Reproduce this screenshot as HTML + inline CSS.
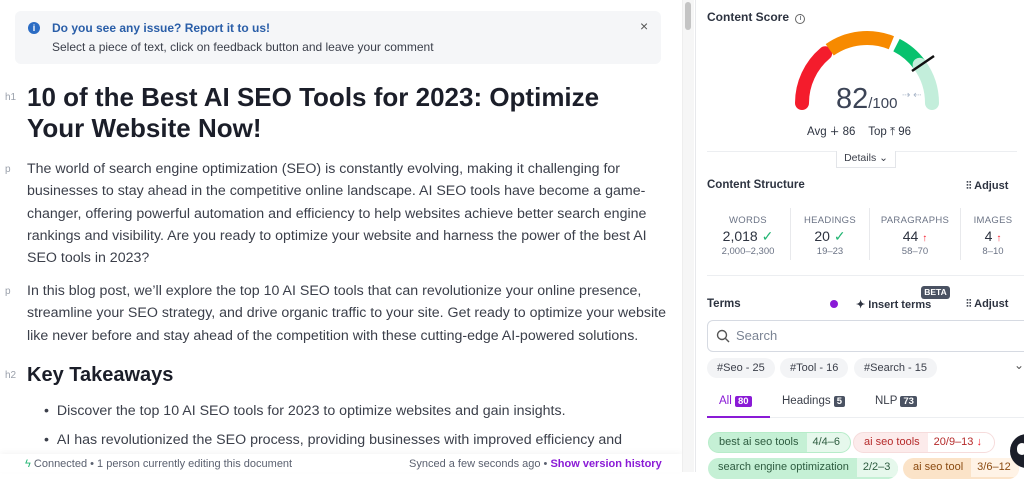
<!DOCTYPE html>
<html><head><meta charset="utf-8"><style>
*{margin:0;padding:0;box-sizing:border-box}
body{width:1024px;height:472px;overflow:hidden;background:#fff;font-family:"Liberation Sans",sans-serif;color:#1f2433;position:relative}
.abs{position:absolute}
.p{font-size:14.2px;line-height:22.3px;color:#3b3f4a;left:27px;width:625px}
.tag{font-size:10px;color:#9aa0ab;left:5px}
.lbl{font-size:9.5px;color:#6b7385;letter-spacing:.3px;text-align:center}
.big{font-size:14px;color:#2d3340;text-align:center}
.rng{font-size:9.5px;color:#6b7385;text-align:center}
.chip{background:#f3f4f6;border-radius:12px;height:20px;font-size:11px;color:#3b3f4a;line-height:20px;padding:0 10px}
</style></head><body>
<div class="abs" style="left:15px;top:11px;width:646px;height:53px;background:#f5f6f8;border-radius:6px"></div>
<div class="abs" style="left:28px;top:22px;width:12px;height:12px;border-radius:50%;background:#2b6cc4;color:#fff;font-size:9px;font-weight:bold;text-align:center;line-height:12px">i</div>
<div class="abs" style="left:52px;top:21px;font-size:12px;font-weight:bold;color:#2a5ea8">Do you see any issue? Report it to us!</div>
<div class="abs" style="left:52px;top:40px;font-size:12px;color:#3b3f4a">Select a piece of text, click on feedback button and leave your comment</div>
<div class="abs" style="left:640px;top:18px;font-size:14px;color:#555">×</div>

<div class="abs tag" style="top:92px">h1</div>
<div class="abs" style="left:27px;top:82px;font-size:26px;font-weight:bold;line-height:31px;color:#1b1e29;width:590px">10 of the Best AI SEO Tools for 2023: Optimize Your Website Now!</div>
<div class="abs tag" style="top:164px">p</div>
<div class="abs p" style="top:158px;width:622px">The world of search engine optimization (SEO) is constantly evolving, making it challenging for businesses to stay ahead in the competitive online landscape. AI SEO tools have become a game-changer, offering powerful automation and efficiency to help websites achieve better search engine rankings and visibility. Are you ready to optimize your website and harness the power of the best AI SEO tools in 2023?</div>
<div class="abs tag" style="top:286px">p</div>
<div class="abs p" style="top:280px;width:640px">In this blog post, we’ll explore the top 10 AI SEO tools that can revolutionize your online presence, streamline your SEO strategy, and drive organic traffic to your site. Get ready to optimize your website like never before and stay ahead of the competition with these cutting-edge AI-powered solutions.</div>
<div class="abs tag" style="top:370px">h2</div>
<div class="abs" style="left:27px;top:364px;font-size:20px;font-weight:bold;color:#1b1e29">Key Takeaways</div>
<div class="abs p" style="left:44px;top:400px">•&nbsp;&nbsp;Discover the top 10 AI SEO tools for 2023 to optimize websites and gain insights.</div>
<div class="abs p" style="left:44px;top:429px">•&nbsp;&nbsp;AI has revolutionized the SEO process, providing businesses with improved efficiency and</div>
<div class="abs" style="left:0;top:454px;width:682px;height:18px;background:#fff;box-shadow:0 -2px 6px rgba(0,0,0,.04)"></div>
<div class="abs" style="left:25px;top:458px;font-size:11px;color:#5b6170"><span style="color:#22b573">ϟ</span> Connected • 1 person currently editing this document</div>
<div class="abs" style="left:409px;top:458px;font-size:11px;color:#5b6170">Synced a few seconds ago • <b style="color:#8a1ad6">Show version history</b></div>
<div class="abs" style="left:682px;top:0;width:12px;height:472px;background:#f6f6f6;border-left:1px solid #eee"></div>
<div class="abs" style="left:685px;top:2px;width:6px;height:28px;background:#c4c4c4;border-radius:3px"></div>
<div class="abs" style="left:695px;top:0;width:1px;height:472px;background:#e8e9ec"></div>

<div class="abs" style="left:707px;top:10px;font-size:12px;font-weight:bold;color:#2d3340">Content Score <span style="display:inline-block;width:10px;height:10px;border:1px solid #666;border-radius:50%;font-size:7px;line-height:8px;text-align:center;font-weight:normal;vertical-align:1px;margin-left:3px">i</span></div>
<svg class="abs" style="left:780px;top:25px" width="170" height="95" viewBox="780 25 170 95">
<g fill="none" stroke-width="14">
<path d="M802 103 A65 65 0 0 1 825.2 53.2" stroke="#f41c2c" stroke-linecap="round"/>
<path d="M829.7 49.8 A65 65 0 0 1 891.4 42.7" stroke="#f78a00"/>
<path d="M896.5 45.1 A65 65 0 0 1 919.6 64.8" stroke="#08c26e"/>
<path d="M919.6 64.8 A65 65 0 0 1 932 103" stroke="#c3eedb" stroke-linecap="round"/>
</g>
<line x1="912" y1="71" x2="934" y2="56" stroke="#111" stroke-width="2.5"/>
<text x="902" y="98" font-size="10" fill="#a9b6c8">⇢ ⇠</text>
</svg>
<div class="abs" style="left:836px;top:83px;font-size:29px;color:#3c4456">82<span style="font-size:15px">/100</span></div>
<div class="abs" style="left:807px;top:124px;font-size:11.5px;color:#2d3340">Avg ∔ 86&nbsp;&nbsp;&nbsp;&nbsp;Top ⤒ 96</div>
<div class="abs" style="left:707px;top:151px;width:310px;height:1px;background:#eceef1"></div>
<div class="abs" style="left:836px;top:151px;width:60px;height:17px;border:1px solid #e3e5e9;border-top:none;background:#fff;font-size:10.5px;color:#3b3f4a;text-align:center;line-height:15px">Details ⌄</div>
<div class="abs" style="left:707px;top:179px;font-size:11.5px;font-weight:bold;color:#2d3340">Content Structure</div>
<div class="abs" style="left:966px;top:180px;font-size:11px;font-weight:bold;color:#2d3340">⫶⫶ Adjust</div>
<div class="abs lbl" style="left:707px;top:215px;width:82px">WORDS</div>
<div class="abs big" style="left:707px;top:228px;width:82px">2,018 <span style="color:#22b573">✓</span></div>
<div class="abs rng" style="left:707px;top:246px;width:82px">2,000–2,300</div>
<div class="abs" style="left:790px;top:208px;width:1px;height:52px;background:#e8e9ec"></div>
<div class="abs lbl" style="left:791px;top:215px;width:78px">HEADINGS</div>
<div class="abs big" style="left:791px;top:228px;width:78px">20 <span style="color:#22b573">✓</span></div>
<div class="abs rng" style="left:791px;top:246px;width:78px">19–23</div>
<div class="abs" style="left:869px;top:208px;width:1px;height:52px;background:#e8e9ec"></div>
<div class="abs lbl" style="left:870px;top:215px;width:90px">PARAGRAPHS</div>
<div class="abs big" style="left:870px;top:228px;width:90px">44 <span style="color:#f41c2c;font-size:10px">↑</span></div>
<div class="abs rng" style="left:870px;top:246px;width:90px">58–70</div>
<div class="abs" style="left:960px;top:208px;width:1px;height:52px;background:#e8e9ec"></div>
<div class="abs lbl" style="left:961px;top:215px;width:64px">IMAGES</div>
<div class="abs big" style="left:961px;top:228px;width:64px">4 <span style="color:#f41c2c;font-size:10px">↑</span></div>
<div class="abs rng" style="left:961px;top:246px;width:64px">8–10</div>
<div class="abs" style="left:707px;top:275px;width:317px;height:1px;background:#eceef1"></div>
<div class="abs" style="left:921px;top:286px;width:29px;height:13px;background:#4a5262;border-radius:3px;color:#fff;font-size:8.5px;font-weight:bold;text-align:center;line-height:13px">BETA</div>
<div class="abs" style="left:707px;top:298px;font-size:11.5px;font-weight:bold;color:#2d3340">Terms</div>
<div class="abs" style="left:830px;top:300px;width:8px;height:8px;border-radius:50%;background:#8a1ad6"></div>
<div class="abs" style="left:856px;top:298px;font-size:11px;font-weight:bold;color:#2d3340">✦ Insert terms</div>
<div class="abs" style="left:966px;top:298px;font-size:11px;font-weight:bold;color:#2d3340">⫶⫶ Adjust</div>
<div class="abs" style="left:707px;top:320px;width:330px;height:32px;border:1px solid #d6dae2;border-radius:6px"></div>
<svg class="abs" style="left:716px;top:329px" width="14" height="14"><circle cx="6" cy="6" r="4.5" fill="none" stroke="#555" stroke-width="1.4"/><line x1="9.5" y1="9.5" x2="13" y2="13" stroke="#555" stroke-width="1.4"/></svg>
<div class="abs" style="left:736px;top:328px;font-size:13px;color:#7b8494">Search</div>
<div class="abs chip" style="left:707px;top:358px">#Seo - 25</div>
<div class="abs chip" style="left:780px;top:358px">#Tool - 16</div>
<div class="abs chip" style="left:854px;top:358px">#Search - 15</div>
<div class="abs" style="left:1014px;top:358px;font-size:12px;color:#555">⌄</div>
<div class="abs" style="left:719px;top:395px;font-size:11.5px;color:#8a1ad6">All <span style="background:#8a1ad6;color:#fff;font-size:9.5px;padding:0 3px;border-radius:2px;font-weight:bold">80</span></div>
<div class="abs" style="left:782px;top:395px;font-size:11.5px;color:#3b3f4a">Headings <span style="background:#4a5262;color:#fff;font-size:9.5px;padding:0 3px;border-radius:2px;font-weight:bold">5</span></div>
<div class="abs" style="left:875px;top:395px;font-size:11.5px;color:#3b3f4a">NLP <span style="background:#4a5262;color:#fff;font-size:9.5px;padding:0 3px;border-radius:2px;font-weight:bold">73</span></div>
<div class="abs" style="left:707px;top:417px;width:317px;height:1px;background:#eceef1"></div>
<div class="abs" style="left:707px;top:416px;width:63px;height:2px;background:#8a1ad6"></div>
<div class="abs" style="left:708px;top:432px;height:21px;border:1px solid #b7ecc9;border-radius:11px;background:#c5f0d5;font-size:11px;line-height:19px;color:#2e5c40;overflow:hidden;white-space:nowrap"><span style="padding:0 8px 0 10px">best ai seo tools</span><span style="background:#e6f8ec;padding:0 10px 0 6px;display:inline-block">4/4–6</span></div>
<div class="abs" style="left:853px;top:432px;height:21px;border:1px solid #f6dcdc;border-radius:11px;background:#fcebeb;font-size:11px;line-height:19px;color:#b52a2a;overflow:hidden;white-space:nowrap"><span style="padding:0 8px 0 10px">ai seo tools</span><span style="background:#fff;padding:0 12px 0 6px;display:inline-block">20/9–13 <span style="color:#f41c2c">↓</span></span></div>
<div class="abs" style="left:708px;top:458px;height:21px;border-radius:11px;background:#c5f0d5;font-size:11px;line-height:19px;color:#2e5c40;overflow:hidden;white-space:nowrap"><span style="padding:0 8px 0 10px">search engine optimization</span><span style="background:#e6f8ec;padding:0 8px 0 6px;display:inline-block">2/2–3</span></div>
<div class="abs" style="left:903px;top:458px;height:21px;border-radius:11px;background:#fbe3c8;font-size:11px;line-height:19px;color:#8a4a10;overflow:hidden;white-space:nowrap"><span style="padding:0 8px 0 10px">ai seo tool</span><span style="background:#fff3e6;padding:0 8px 0 6px;display:inline-block">3/6–12</span></div>
<div class="abs" style="left:1010px;top:434px;width:34px;height:34px;border-radius:50%;background:#1b1e29"></div>
<div class="abs" style="left:1017px;top:443px;width:10px;height:12px;border-radius:5px;background:#fff"></div>
</body></html>
